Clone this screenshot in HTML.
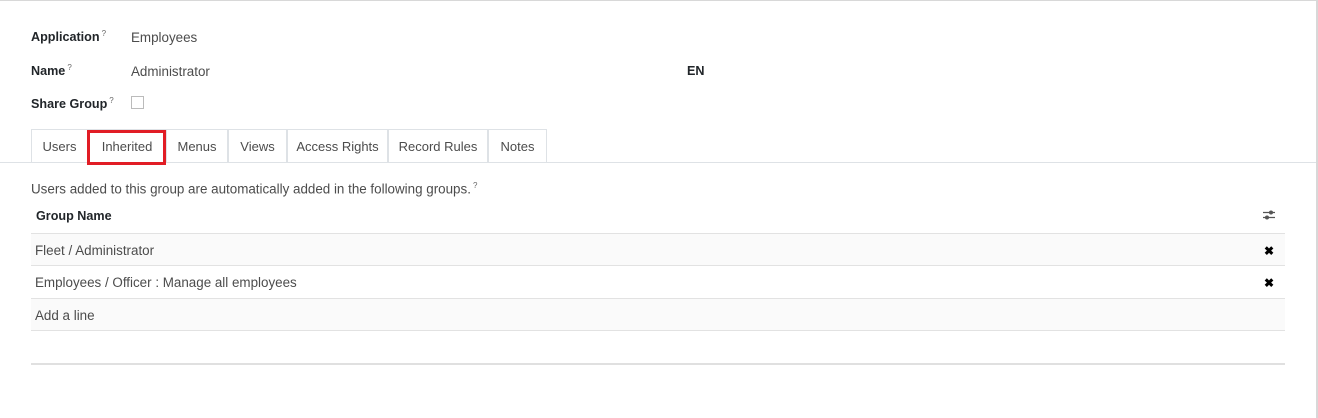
<!DOCTYPE html>
<html><head><style>
body{margin:0;width:1318px;height:418px;background:#fff;font-family:"Liberation Sans",sans-serif;font-size:13.4px;color:#4c4c4c;position:relative;overflow:hidden}
.a{position:absolute;white-space:nowrap}
.lbl{font-weight:bold;color:#212529;font-size:12.6px}
sup{font-size:8px;color:#666;margin-left:2px;font-weight:normal}
.tab{position:absolute;top:129px;height:33px;border:1px solid #dee2e6;border-bottom:none;line-height:33px;text-align:center;box-sizing:border-box;color:#4c4c4c;margin-left:-1px;font-size:13px}
.row{position:absolute;left:31px;width:1254px;border-top:1px solid #e2e2e2;box-sizing:border-box}
</style></head><body>
<div class="a" style="left:0;top:0;width:1316px;height:1px;background:#d8d8d8"></div>
<div class="a" style="left:1316px;top:0;width:2px;height:418px;background:#d8d8d8"></div>
<div class="a lbl" style="left:31px;top:29px">Application<sup>?</sup></div>
<div class="a" style="left:131px;top:30px">Employees</div>
<div class="a lbl" style="left:31px;top:63px">Name<sup>?</sup></div>
<div class="a" style="left:131px;top:64px">Administrator</div>
<div class="a lbl" style="left:687px;top:64px">EN</div>
<div class="a lbl" style="left:31px;top:96px">Share Group<sup>?</sup></div>
<div class="a" style="left:131px;top:96px;width:11px;height:11px;border:1px solid #bbb"></div>
<div class="a" style="left:0;top:162px;width:1316px;height:1px;background:#dee2e6"></div>
<div class="tab" style="left:32px;width:57px">Users</div>
<div class="tab" style="left:89px;width:78px">Inherited</div>
<div class="tab" style="left:167px;width:62px">Menus</div>
<div class="tab" style="left:229px;width:59px">Views</div>
<div class="tab" style="left:288px;width:101px">Access Rights</div>
<div class="tab" style="left:389px;width:100px">Record Rules</div>
<div class="tab" style="left:489px;width:59px">Notes</div>
<div class="a" style="left:87px;top:130px;width:73px;height:29px;border:3px solid #e11d25"></div>
<div class="a" style="left:31px;top:181px;color:#4c4c4c">Users added to this group are automatically added in the following groups.<sup>?</sup></div>
<div class="a lbl" style="left:36px;top:209px">Group Name</div>
<svg class="a" style="left:1262px;top:209px" width="14" height="12"><path d="M1 3.5H13M1 8.5H13" stroke="#555" stroke-width="1.3"/><circle cx="9" cy="3.5" r="2" fill="#555"/><circle cx="5" cy="8.5" r="2" fill="#555"/></svg>
<div class="row" style="top:233px;height:33px;background:#fafafa"></div>
<div class="row" style="top:265px;height:33px"></div>
<div class="row" style="top:298px;height:33px;background:#fafafa;border-bottom:1px solid #e2e2e2"></div>
<div class="a" style="left:35px;top:243px">Fleet / Administrator</div>
<div class="a" style="left:35px;top:275px">Employees / Officer : Manage all employees</div>
<div class="a" style="left:35px;top:308px">Add a line</div>
<div class="a" style="left:1264px;top:244px;font-weight:bold;color:#000;font-size:12px">✖</div>
<div class="a" style="left:1264px;top:276px;font-weight:bold;color:#000;font-size:12px">✖</div>
<div class="a" style="left:31px;top:363px;width:1254px;height:2px;background:#e0e0e0"></div>
</body></html>
